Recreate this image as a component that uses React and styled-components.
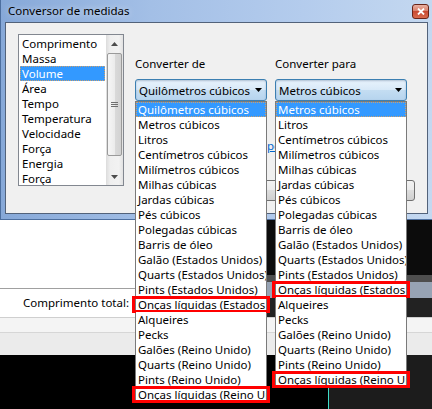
import React from "react";
import styled, { createGlobalStyle } from "styled-components";

const GlobalStyle = createGlobalStyle`
  html, body {
    margin: 0;
    padding: 0;
    background: #fff;
  }
  body {
    font-family: "Noto Sans", "DejaVu Sans", sans-serif;
    font-size: 11.5px;
  }
`;

const categories = [
  "Comprimento",
  "Massa",
  "Volume",
  "Área",
  "Tempo",
  "Temperatura",
  "Velocidade",
  "Força",
  "Energia",
  "Força"
];

const volumeUnits = [
  "Metros cúbicos",
  "Litros",
  "Centímetros cúbicos",
  "Milímetros cúbicos",
  "Milhas cúbicas",
  "Jardas cúbicas",
  "Pés cúbicos",
  "Polegadas cúbicas",
  "Barris de óleo",
  "Galão (Estados Unidos)",
  "Quarts (Estados Unidos)",
  "Pints (Estados Unidos)",
  "Onças líquidas (Estados Unidos)",
  "Alqueires",
  "Pecks",
  "Galões (Reino Unido)",
  "Quarts (Reino Unido)",
  "Pints (Reino Unido)",
  "Onças líquidas (Reino Unido)"
];

const fromUnits = ["Quilômetros cúbicos", ...volumeUnits];

const Screen = styled.div`
  width: 432px;
  height: 409px;
  overflow: hidden;
  display: flex;
  flex-direction: column;
  font-family: "Noto Sans", "DejaVu Sans", sans-serif;
  font-size: 11.5px;
  color: #000;
`;

/* dialog window */

const Window = styled.div`
  position: relative;
  z-index: 2;
  height: 220px;
  box-sizing: border-box;
  display: flex;
  flex-direction: column;
  padding: 0 4px 6px 5px;
  background: linear-gradient(to right, #86a8d8 0%, #a3bfe6 35%, #b4cced 70%, #c4d8f0 100%);
  box-shadow: inset 1px 0 0 #4d6f9f, inset 0 -1px 0 #4d6f9f;
`;

const TitleBar = styled.div`
  height: 22px;
  display: flex;
  align-items: center;
  justify-content: space-between;
  padding-left: 3px;
`;

const Title = styled.span`
  font-size: 11.5px;
  line-height: 16px;
  text-shadow: 0 0 6px rgba(255, 255, 255, 0.7);
`;

const CloseButton = styled.div`
  width: 17px;
  height: 15px;
  box-sizing: border-box;
  margin-right: -1px;
  border: 1px solid #6a2418;
  border-radius: 3px;
  display: flex;
  align-items: center;
  justify-content: center;
  background: linear-gradient(to bottom, #eab1a3 0%, #d9806b 45%, #c84a33 50%, #d96a4d 100%);
`;

const Client = styled.div`
  flex: 1;
  display: flex;
  align-items: flex-start;
  padding: 11px 0 0 12px;
  background: #f0f0f0;
  border: 1px solid #52627a;
`;

/* category list box */

const ListBox = styled.div`
  width: 106px;
  height: 152px;
  box-sizing: border-box;
  display: flex;
  border: 1px solid #828790;
  background: #fff;
  overflow: hidden;
`;

const ListItems = styled.div`
  flex: 1;
  padding: 1px;
  overflow: hidden;
`;

const ListEntry = styled.div`
  height: 15px;
  line-height: 15px;
  padding-left: 2px;
  white-space: nowrap;
  background: ${p => (p.$selected ? "#3399ff" : "transparent")};
  color: ${p => (p.$selected ? "#fff" : "#000")};
  outline: ${p => (p.$selected ? "1px dotted #c9a070" : "none")};
  outline-offset: -1px;
`;

const ScrollBar = styled.div`
  width: 17px;
  display: flex;
  flex-direction: column;
  background: linear-gradient(to right, #dcdcdc 0%, #efefef 25%, #f2f2f2 75%, #e2e2e2 100%);
`;

const ScrollButton = styled.div`
  height: 17px;
  display: flex;
  align-items: center;
  justify-content: center;
`;

const ScrollTrack = styled.div`
  flex: 1;
  display: flex;
  flex-direction: column;
  padding: 1px 1px 0;
`;

const Thumb = styled.div`
  height: 103px;
  box-sizing: border-box;
  border: 1px solid #9a9a9a;
  border-radius: 2px;
  display: flex;
  align-items: center;
  justify-content: center;
  background: linear-gradient(to right, #f6f6f6 0%, #ececec 50%, #dadada 51%, #d2d2d2 100%);
`;

/* converter controls */

const Controls = styled.div`
  flex: 1;
  display: flex;
  flex-direction: column;
  margin-left: 11px;
  padding-right: 12px;
`;

const ComboRow = styled.div`
  display: flex;
  gap: 8px;
  padding-top: 22px;
`;

const Column = styled.div`
  width: 132px;
  display: flex;
  flex-direction: column;
`;

const FieldLabel = styled.div`
  line-height: 16px;
  margin-bottom: 7px;
`;

const ComboWrap = styled.div`
  position: relative;
`;

const Combo = styled.div`
  height: 22px;
  box-sizing: border-box;
  display: flex;
  align-items: center;
  padding-left: 3px;
  border: 1px solid #3c7fb1;
  border-radius: 3px;
  background: linear-gradient(to bottom, #e8f3fc 0%, #d8e9f8 48%, #c4ddf2 50%, #b6d4ee 100%);
  box-shadow: inset 0 1px 2px rgba(0, 40, 90, 0.25);
`;

const ComboText = styled.span`
  flex: 1;
  overflow: hidden;
  white-space: nowrap;
`;

const ComboArrow = styled.span`
  width: 16px;
  display: flex;
  justify-content: center;
`;

const DropList = styled.div`
  position: absolute;
  top: 100%;
  left: 0;
  width: 100%;
  z-index: 10;
  box-sizing: border-box;
  border: 1px solid #7a7a7a;
  background: #fff;
`;

const DropItem = styled.div`
  position: relative;
  height: 15px;
  line-height: 15px;
  background: ${p => (p.$selected ? "#3399ff" : "#fff")};
  color: ${p => (p.$selected ? "#fff" : "#000")};
  outline: ${p => (p.$selected ? "1px dotted #c9a070" : "none")};
  outline-offset: -1px;
`;

const DropText = styled.span`
  display: block;
  padding-left: 2px;
  overflow: hidden;
  white-space: nowrap;
`;

const Mark = styled.span`
  position: absolute;
  top: -1px;
  bottom: -1px;
  left: -4px;
  right: -4px;
  border: 3px solid #ff0000;
  pointer-events: none;
`;

const LinkRow = styled.div`
  margin-top: 37px;
  padding-left: 132px;
  line-height: 16px;
`;

const HelpLink = styled.span`
  color: #0066cc;
  text-decoration: underline;
`;

const ButtonRow = styled.div`
  margin-top: 26px;
  display: flex;
  justify-content: flex-end;
`;

const PushButton = styled.div`
  width: 152px;
  height: 21px;
  box-sizing: border-box;
  border: 1px solid #707070;
  border-radius: 3px;
  background: linear-gradient(to bottom, #f2f2f2 0%, #ebebeb 48%, #dddddd 50%, #cfcfcf 100%);
`;

/* application behind the dialog */

const UpperBand = styled.div`
  height: 97px;
  display: flex;
`;

const LeftPanel = styled.div`
  width: 266px;
  display: flex;
  flex-direction: column;
  background: #fff;
`;

const PanelSpacer = styled.div`
  height: 68px;
`;

const TotalRow = styled.div`
  height: 28px;
  display: flex;
  align-items: center;
  border-top: 1px solid #a0a0a0;
  padding-bottom: 1px;
  box-sizing: border-box;
`;

const TotalLabel = styled.span`
  width: 129px;
  text-align: right;
  white-space: nowrap;
`;

const RightPanel = styled.div`
  flex: 1;
  display: flex;
  flex-direction: column;
`;

const Strip = styled.div`
  height: ${p => p.$h}px;
  background: ${p => p.$color};
`;

const Rule = styled.div`
  height: 1px;
  background: ${p => p.$color};
`;

const BottomBand = styled.div`
  flex: 1;
  display: flex;
`;

const Viewport = styled.div`
  width: 328px;
  background: #000;
`;

const CursorLine = styled.div`
  width: 1px;
  background: #3fdcc8;
`;

const SidePane = styled.div`
  flex: 1;
  background: #1c1c1c;
`;

const TriangleUp = () => (
  <svg width="7" height="4" viewBox="0 0 7 4">
    <polygon points="0,4 7,4 3.5,0" fill="#4d4d4d" />
  </svg>
);

const TriangleDown = ({ color = "#4d4d4d" }) => (
  <svg width="7" height="4" viewBox="0 0 7 4">
    <polygon points="0,0 7,0 3.5,4" fill={color} />
  </svg>
);

const Grip = () => (
  <svg width="7" height="6" viewBox="0 0 7 6">
    <rect x="0" y="0" width="7" height="1" fill="#6f6f6f" />
    <rect x="0" y="2" width="7" height="1" fill="#6f6f6f" />
    <rect x="0" y="4" width="7" height="1" fill="#6f6f6f" />
  </svg>
);

const CloseGlyph = () => (
  <svg width="8" height="7" viewBox="0 0 8 7">
    <path d="M1 0.5 L7 6.5 M7 0.5 L1 6.5" stroke="#fff" strokeWidth="1.8" />
  </svg>
);

const UnitCombo = ({ label, units }) => (
  <Column>
    <FieldLabel>{label}</FieldLabel>
    <ComboWrap>
      <Combo>
        <ComboText>{units[0]}</ComboText>
        <ComboArrow>
          <TriangleDown color="#000" />
        </ComboArrow>
      </Combo>
      <DropList>
        {units.map((unit, i) => (
          <DropItem key={unit} $selected={i === 0}>
            <DropText>{unit}</DropText>
            {unit.startsWith("Onças") && <Mark />}
          </DropItem>
        ))}
      </DropList>
    </ComboWrap>
  </Column>
);

export default function App() {
  return (
    <Screen>
      <GlobalStyle />
      <Window>
        <TitleBar>
          <Title>Conversor de medidas</Title>
          <CloseButton>
            <CloseGlyph />
          </CloseButton>
        </TitleBar>
        <Client>
          <ListBox>
            <ListItems>
              {categories.map((name, i) => (
                <ListEntry key={i} $selected={name === "Volume"}>
                  {name}
                </ListEntry>
              ))}
            </ListItems>
            <ScrollBar>
              <ScrollButton>
                <TriangleUp />
              </ScrollButton>
              <ScrollTrack>
                <Thumb>
                  <Grip />
                </Thumb>
              </ScrollTrack>
              <ScrollButton>
                <TriangleDown />
              </ScrollButton>
            </ScrollBar>
          </ListBox>
          <Controls>
            <ComboRow>
              <UnitCombo label="Converter de" units={fromUnits} />
              <UnitCombo label="Converter para" units={volumeUnits} />
            </ComboRow>
            <LinkRow>
              <HelpLink>personalizar</HelpLink>
            </LinkRow>
            <ButtonRow>
              <PushButton />
            </ButtonRow>
          </Controls>
        </Client>
      </Window>
      <UpperBand>
        <LeftPanel>
          <PanelSpacer />
          <TotalRow>
            <TotalLabel>Comprimento total:</TotalLabel>
          </TotalRow>
        </LeftPanel>
        <RightPanel>
          <Strip $h={55} $color="#0c0c0c" />
          <Strip $h={7} $color="#4e4e4e" />
          <Strip $h={16} $color="#97a3b4" />
          <Strip $h={19} $color="#222222" />
        </RightPanel>
      </UpperBand>
      <Rule $color="#cfcfcf" />
      <Strip $h={14} $color="#f4f4f4" />
      <Rule $color="#d6d6d6" />
      <Strip $h={22} $color="#ebebeb" />
      <BottomBand>
        <Viewport />
        <CursorLine />
        <SidePane />
      </BottomBand>
    </Screen>
  );
}
